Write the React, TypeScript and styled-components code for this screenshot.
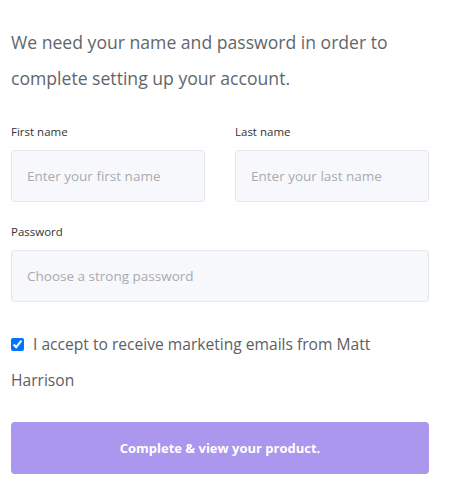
import React from 'react'
import { useState } from 'react'
import styled, { createGlobalStyle } from 'styled-components'

const GlobalStyle = createGlobalStyle`
  body {
    margin: 0;
    background: #ffffff;
    font-family: 'Open Sans', 'Lato', sans-serif;
  }
`

interface FieldProps {
  label: string
  placeholder: string
  type?: string
}

const Field: React.FC<FieldProps> = ({ label, placeholder, type = 'text' }) => (
  <FieldWrapper>
    <Label>{label}</Label>
    <Input type={type} placeholder={placeholder} />
  </FieldWrapper>
)

const App: React.FC = () => {
  const [accepted, setAccepted] = useState(true)

  return (
    <>
      <GlobalStyle />
      <Form onSubmit={e => e.preventDefault()}>
        <Intro>We need your name and password in order to complete setting up your account.</Intro>

        <NameRow>
          <Field label="First name" placeholder="Enter your first name" />
          <Field label="Last name" placeholder="Enter your last name" />
        </NameRow>

        <Field label="Password" placeholder="Choose a strong password" type="password" />

        <Consent>
          <Checkbox type="checkbox" checked={accepted} onChange={() => setAccepted(!accepted)} />
          I accept to receive marketing emails from Matt Harrison
        </Consent>

        <SubmitButton type="submit">Complete &amp; view your product.</SubmitButton>
      </Form>
    </>
  )
}

export default App

const Form = styled.form`
  width: 418px;
  padding: 24px 25px 0 11px;
  display: flex;
  flex-direction: column;
`

const Intro = styled.p`
  margin: 0 0 28px;
  font-size: 17.6px;
  line-height: 36px;
  color: #62666b;
`

const NameRow = styled.div`
  display: grid;
  grid-template-columns: 1fr 1fr;
  column-gap: 30px;
  margin-bottom: 22px;
`

const FieldWrapper = styled.div`
  display: flex;
  flex-direction: column;
`

const Label = styled.label`
  font-size: 11.5px;
  line-height: 16px;
  color: #333;
  margin-bottom: 10px;
`

const Input = styled.input`
  box-sizing: border-box;
  width: 100%;
  height: 52px;
  padding: 0 15px;
  border: 1px solid #e4e6ea;
  border-radius: 3px;
  background: #f7f8fb;
  font-family: inherit;
  font-size: 13.5px;
  color: #333;
  outline: none;

  &::placeholder {
    color: #a9abaf;
  }
`

const Consent = styled.label`
  margin-top: 24px;
  font-size: 15.6px;
  line-height: 36px;
  color: #5c6065;
`

const Checkbox = styled.input`
  width: 13px;
  height: 13px;
  margin: 0 9px 0 0;
  vertical-align: -1px;
`

const SubmitButton = styled.button`
  margin-top: 24px;
  height: 52px;
  border: none;
  border-radius: 4px;
  background: #ab97ed;
  color: #ffffff;
  font-family: inherit;
  font-size: 13px;
  font-weight: 700;
  cursor: pointer;
`
